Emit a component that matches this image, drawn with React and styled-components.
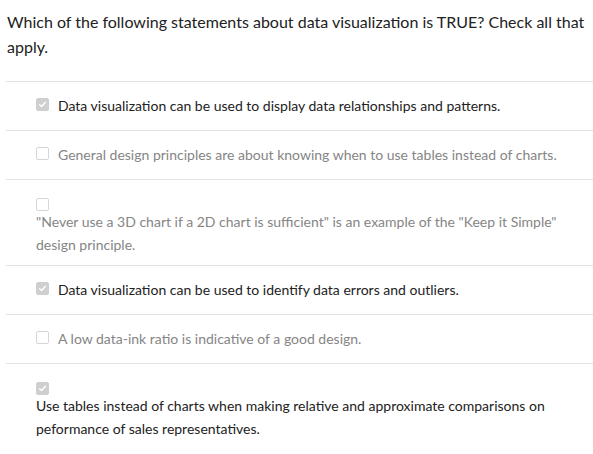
import React from "react";
import styled, { createGlobalStyle } from "styled-components";

const Global = createGlobalStyle`
  html, body { margin: 0; padding: 0; background: #fff; }
  body { font-family: Lato, "Open Sans", sans-serif; }
`;

const Page = styled.div`
  padding: 0 0 0 6px;
`;

const Question = styled.div`
  font-size: 16px;
  line-height: 25px;
  color: #222;
  padding: 9px 4px 22px 1px;
`;

const List = styled.div`
  display: flex;
  flex-direction: column;
`;

const Row = styled.label`
  display: block;
  border-top: 1px solid #e2e2e2;
  padding: ${(p) => (p.$stacked ? "13px 24px 9px 30px" : "13px 24px 12.5px 30px")};
  font-size: 14px;
  line-height: 22.5px;
  color: ${(p) => (p.$checked ? "#222" : "#858585")};
`;

const BoxLine = styled.div`
  height: 18px;
  display: flex;
  align-items: flex-end;
`;

const Box = styled.span`
  display: inline-block;
  box-sizing: border-box;
  width: 13px;
  height: 13px;
  border-radius: 2px;
  margin-right: ${(p) => (p.$inline ? "9px" : "0")};
  vertical-align: baseline;
  background: ${(p) => (p.$checked ? "#cfcfcf" : "#fff")};
  border: 1px solid ${(p) => (p.$checked ? "#cfcfcf" : "#d6d6d6")};
  position: relative;
`;

const Check = styled.svg`
  position: absolute;
  left: 1px;
  top: 1px;
  width: 9px;
  height: 9px;
`;

function CheckBox({ checked, inline }) {
  return (
    <Box $checked={checked} $inline={inline}>
      {checked && (
        <Check viewBox="0 0 10 10">
          <path d="M1.8 5.2 L4 7.3 L8.3 2.6" fill="none" stroke="#fff" strokeWidth="1.6" strokeLinecap="round" strokeLinejoin="round" />
        </Check>
      )}
    </Box>
  );
}

const options = [
  { text: "Data visualization can be used to display data relationships and patterns.", checked: true },
  { text: "General design principles are about knowing when to use tables instead of charts.", checked: false },
  { text: "\"Never use a 3D chart if a 2D chart is sufficient\" is an example of the \"Keep it Simple\" design principle.", checked: false, stacked: true },
  { text: "Data visualization can be used to identify data errors and outliers.", checked: true },
  { text: "A low data-ink ratio is indicative of a good design.", checked: false },
  { text: "Use tables instead of charts when making relative and approximate comparisons on peformance of sales representatives.", checked: true, stacked: true },
];

export default function App() {
  return (
    <Page>
      <Global />
      <Question>
        Which of the following statements about data visualization is TRUE? Check all that apply.
      </Question>
      <List>
        {options.map((o, i) => (
          <Row key={i} $checked={o.checked} $stacked={o.stacked}>
            {o.stacked ? (
              <>
                <BoxLine>
                  <CheckBox checked={o.checked} />
                </BoxLine>
                <div>{o.text}</div>
              </>
            ) : (
              <>
                <CheckBox checked={o.checked} inline />
                {o.text}
              </>
            )}
          </Row>
        ))}
      </List>
    </Page>
  );
}
